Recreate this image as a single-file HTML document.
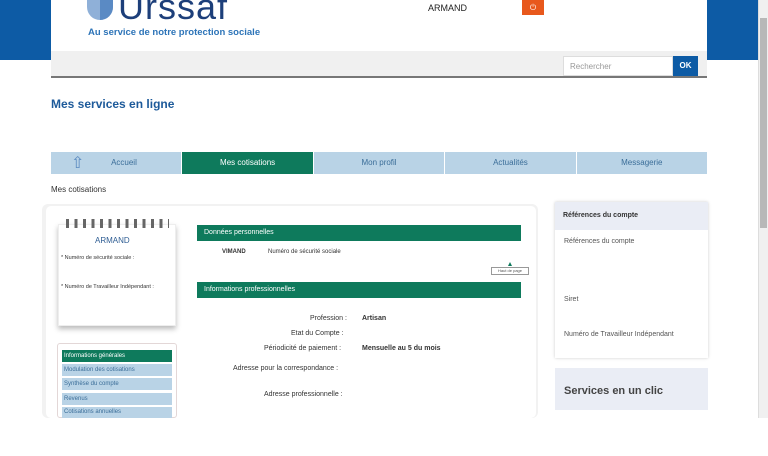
<!DOCTYPE html>
<html><head><meta charset="utf-8"><style>
*{margin:0;padding:0;box-sizing:border-box}
body{width:768px;height:456px;background:#fff;font-family:"Liberation Sans",sans-serif;position:relative;overflow:hidden}
.a{position:absolute}
.t{font-size:7px;color:#333;white-space:nowrap}
</style></head><body>
<div class="a" style="left:0;top:0;width:51px;height:60px;background:#0d5ba5"></div>
<div class="a" style="left:707px;top:0;width:51px;height:60px;background:#0d5ba5"></div>
<div class="a" style="left:51px;top:0;width:656px;height:51px;background:#fff"></div>
<div class="a" style="left:87px;top:0;width:26px;height:20px;background:#8fb0d8;border-radius:0 0 13px 13px"></div>
<div class="a" style="left:100px;top:0;width:13px;height:20px;background:#5a8ac4;border-radius:0 0 13px 0"></div>
<div class="a" style="left:118px;top:-14px;font-size:36px;color:#1d3f7a;letter-spacing:1px">Urssaf</div>
<div class="a" style="left:88px;top:27px;font-size:9.5px;color:#2d74b8;font-weight:bold">Au service de notre protection sociale</div>
<div class="a t" style="left:428px;top:3px;font-size:9px;color:#222">ARMAND</div>
<div class="a" style="left:522px;top:0;width:22px;height:15px;background:#e8581c;color:#fff;font-size:8px;text-align:center;line-height:15px">&#9211;</div>
<div class="a" style="left:51px;top:51px;width:656px;height:27px;background:#f0f0f0;border-bottom:2px solid #777"></div>
<div class="a" style="left:563px;top:56px;width:110px;height:20px;background:#fff;border:1px solid #ddd;font-size:8px;color:#999;padding:5px 6px">Rechercher</div>
<div class="a" style="left:673px;top:56px;width:25px;height:20px;background:#0d5ba5;color:#fff;font-size:8px;text-align:center;line-height:20px;font-weight:bold">OK</div>
<div class="a" style="left:51px;top:97px;font-size:12px;color:#1d5a9a;font-weight:bold">Mes services en ligne</div>
<div class="a" style="left:51px;top:152px;width:656px;height:22px;display:flex;gap:1px">
<div style="flex:1;background:#b9d3e6;font-size:8px;color:#3a6d98;line-height:22px;text-align:center;position:relative">&nbsp;&nbsp;&nbsp;&nbsp;&nbsp;&nbsp;&nbsp;Accueil<span style="position:absolute;left:20px;top:1px;font-size:16px;color:#5a8ac0">&#8679;</span></div>
<div style="flex:1;background:#0e7a5c;font-size:8px;color:#fff;line-height:22px;text-align:center">Mes cotisations</div>
<div style="flex:1;background:#b9d3e6;font-size:8px;color:#3a6d98;line-height:22px;text-align:center">Mon profil</div>
<div style="flex:1;background:#b9d3e6;font-size:8px;color:#3a6d98;line-height:22px;text-align:center">Actualités</div>
<div style="flex:1;background:#b9d3e6;font-size:8px;color:#3a6d98;line-height:22px;text-align:center">Messagerie</div>
</div>
<div class="a t" style="left:51px;top:185px;font-size:8px">Mes cotisations</div>
<div class="a" style="left:42px;top:204px;width:496px;height:214px;background:#f2f2f2;border-radius:6px"></div>
<div class="a" style="left:46px;top:206px;width:490px;height:212px;background:#fff;border-radius:5px"></div>
<div class="a" style="left:58px;top:224px;width:118px;height:102px;background:#fff;box-shadow:0 3px 5px #bbb;border:1px solid #eee"></div>
<div class="a" style="left:66px;top:219px;width:103px;height:9px;background:repeating-linear-gradient(90deg,#666 0 3px,transparent 3px 8.5px)"></div>
<div class="a t" style="left:95px;top:236px;font-size:8px;color:#2e5d93">ARMAND</div>
<div class="a t" style="left:61px;top:255px;font-size:5.5px">* Numéro de sécurité sociale :</div>
<div class="a t" style="left:61px;top:284px;font-size:5.5px">* Numéro de Travailleur Indépendant :</div>
<div class="a" style="left:57px;top:343px;width:120px;height:75px;border:1px solid #e3d7d7;border-radius:3px"></div>
<div class="a" style="left:62px;top:350px;width:110px;height:12px;background:#0e7a5c;color:#fff;font-size:6px;padding:3px 2px">Informations générales</div>
<div class="a" style="left:62px;top:364px;width:110px;height:12px;background:#b9d3e6;color:#3a6d98;font-size:6px;padding:3px 2px">Modulation des cotisations</div>
<div class="a" style="left:62px;top:378px;width:110px;height:12px;background:#b9d3e6;color:#3a6d98;font-size:6px;padding:3px 2px">Synthèse du compte</div>
<div class="a" style="left:62px;top:393px;width:110px;height:12px;background:#b9d3e6;color:#3a6d98;font-size:6px;padding:3px 2px">Revenus</div>
<div class="a" style="left:62px;top:407px;width:110px;height:11px;background:#b9d3e6;color:#3a6d98;font-size:6px;padding:2px 2px">Cotisations annuelles</div>
<div class="a" style="left:197px;top:225px;width:324px;height:16px;background:#0e7a5c;color:#fff;font-size:7px;padding:4px 7px">Données personnelles</div>
<div class="a t" style="left:222px;top:249px;font-weight:bold;font-size:6px">VIMAND</div>
<div class="a t" style="left:268px;top:249px;font-size:6px">Numéro de sécurité sociale</div>
<div class="a" style="left:508px;top:262px;width:0;height:0;border-left:2px solid transparent;border-right:2px solid transparent;border-bottom:4px solid #0e7a5c"></div>
<div class="a" style="left:491px;top:267px;width:38px;height:8px;border:1px solid #999;font-size:4px;color:#555;text-align:center">Haut de page</div>
<div class="a" style="left:197px;top:282px;width:324px;height:16px;background:#0e7a5c;color:#fff;font-size:7px;padding:4px 7px">Informations professionnelles</div>
<div class="a t" style="left:310px;top:315px;font-size:7px">Profession :</div>
<div class="a t" style="left:362px;top:315px;font-size:7px;font-weight:bold">Artisan</div>
<div class="a t" style="left:291px;top:330px;font-size:7px">Etat du Compte :</div>
<div class="a t" style="left:264px;top:345px;font-size:7px">Périodicité de paiement :</div>
<div class="a t" style="left:362px;top:345px;font-size:7px;font-weight:bold">Mensuelle au 5 du mois</div>
<div class="a t" style="left:233px;top:365px;font-size:7px">Adresse pour la correspondance :</div>
<div class="a t" style="left:264px;top:391px;font-size:7px">Adresse professionnelle :</div>
<div class="a" style="left:555px;top:202px;width:153px;height:156px;background:#fff;box-shadow:0 0 3px #ccc"></div>
<div class="a" style="left:555px;top:202px;width:153px;height:28px;background:#eaedf5;font-size:7px;font-weight:bold;color:#333;padding:10px 8px">Références du compte</div>
<div class="a t" style="left:564px;top:238px;font-size:7px;color:#555">Références du compte</div>
<div class="a t" style="left:564px;top:296px;font-size:7px;color:#555">Siret</div>
<div class="a t" style="left:564px;top:331px;font-size:7px;color:#555">Numéro de Travailleur Indépendant</div>
<div class="a" style="left:555px;top:368px;width:153px;height:50px;background:#eaedf5"></div>
<div class="a t" style="left:564px;top:385px;font-size:11px;font-weight:bold;color:#444">Services en un clic</div>
<div class="a" style="left:555px;top:410px;width:153px;height:8px;background:#fff"></div>
<div class="a" style="left:758px;top:0;width:10px;height:418px;background:#f0f0f0;border-left:1px solid #ddd"></div>
<div class="a" style="left:760px;top:18px;width:7px;height:210px;background:#b8b8b8"></div>
<div class="a" style="left:0;top:418px;width:768px;height:38px;background:#fff"></div>
</body></html>
